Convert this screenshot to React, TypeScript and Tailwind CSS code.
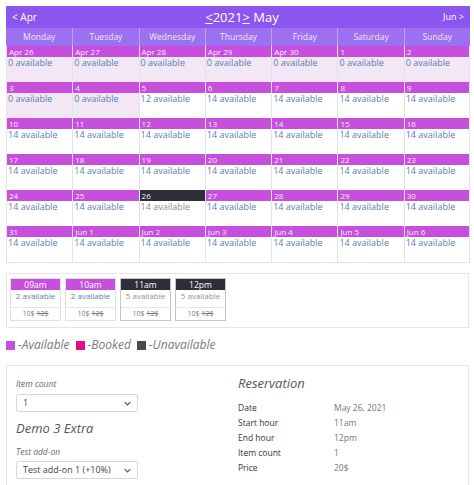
import React from 'react';

type Day = { label: string; count: number; past?: boolean; selected?: boolean };

const weeks: Day[][] = [
  [
    { label: 'Apr 26', count: 0, past: true },
    { label: 'Apr 27', count: 0, past: true },
    { label: 'Apr 28', count: 0, past: true },
    { label: 'Apr 29', count: 0, past: true },
    { label: 'Apr 30', count: 0, past: true },
    { label: '1', count: 0, past: true },
    { label: '2', count: 0, past: true },
  ],
  [
    { label: '3', count: 0, past: true },
    { label: '4', count: 0, past: true },
    { label: '5', count: 12 },
    { label: '6', count: 14 },
    { label: '7', count: 14 },
    { label: '8', count: 14 },
    { label: '9', count: 14 },
  ],
  ['10', '11', '12', '13', '14', '15', '16'].map((l) => ({ label: l, count: 14 })),
  ['17', '18', '19', '20', '21', '22', '23'].map((l) => ({ label: l, count: 14 })),
  [
    { label: '24', count: 14 },
    { label: '25', count: 14 },
    { label: '26', count: 14, selected: true },
    { label: '27', count: 14 },
    { label: '28', count: 14 },
    { label: '29', count: 14 },
    { label: '30', count: 14 },
  ],
  ['31', 'Jun 1', 'Jun 2', 'Jun 3', 'Jun 4', 'Jun 5', 'Jun 6'].map((l) => ({ label: l, count: 14 })),
];

const weekdays = ['Monday', 'Tuesday', 'Wednesday', 'Thursday', 'Friday', 'Saturday', 'Sunday'];

const slots = [
  { time: '09am', count: 2, open: true },
  { time: '10am', count: 2, open: true },
  { time: '11am', count: 5, open: false },
  { time: '12pm', count: 5, open: false },
];

const details = [
  ['Date', 'May 26, 2021'],
  ['Start hour', '11am'],
  ['End hour', '12pm'],
  ['Item count', '1'],
  ['Price', '20$'],
];

function Chevron() {
  return (
    <svg width="7" height="5" viewBox="0 0 10 6" fill="none" stroke="#555" strokeWidth="1.6">
      <path d="M1 1l4 4 4-4" />
    </svg>
  );
}

export default function App() {
  return (
    <div className="w-[474px] h-[485px] overflow-hidden bg-white px-[6px] pt-[6px] font-['Open_Sans',sans-serif]">
      {/* Calendar */}
      <div className="w-[464px] border-b border-[#e2e2e2]">
        <div className="h-[22px] bg-[#8d55ef] text-white flex items-center justify-between px-[6px]">
          <span className="text-[10px]">&lt; Apr</span>
          <span className="text-[13px] leading-none ml-[4px]">
            <span className="underline">&lt;</span>2021<span className="underline">&gt;</span> May
          </span>
          <span className="text-[9px]">Jun &gt;</span>
        </div>
        <div className="grid grid-cols-7 h-[18px] bg-[#9c70f1]">
          {weekdays.map((d, i) => (
            <div
              key={d}
              className={`flex items-center justify-center text-[8.5px] text-[#efe7fd] ${i > 0 ? 'border-l border-[#c0a4f6]' : ''}`}
            >
              {d}
            </div>
          ))}
        </div>
        {weeks.map((w, wi) => (
          <div key={wi} className="grid grid-cols-7">
            {w.map((d, di) => (
              <div
                key={di}
                className={`h-[36px] flex flex-col border-l ${di === 6 ? 'border-r' : ''} border-[#e3e3e3] ${d.past ? 'bg-[#f3e6f5]' : 'bg-white'}`}
              >
                <div
                  className={`h-[11px] leading-[11px] text-[8px] pl-[2px] text-[#fbeefd] ${d.selected ? 'bg-[#2e2d38]' : 'bg-[#c650dd]'}`}
                >
                  {d.label}
                </div>
                <div
                  className={`text-[9px] leading-[11px] pl-[1px] ${d.selected ? 'text-[#8f8f8f]' : 'text-[#5781ab]'}`}
                >
                  {d.count} available
                </div>
              </div>
            ))}
          </div>
        ))}
      </div>

      {/* Time slots */}
      <div className="mt-[10px] w-[463px] h-[55px] border border-[#e6e6e6] px-[3px] pt-[4px] flex gap-[4px]">
        {slots.map((s) => (
          <div
            key={s.time}
            className={`w-[51px] h-[43px] border flex flex-col ${s.open ? 'border-[#e0e0e0]' : 'border-[#c6c6c6]'}`}
          >
            <div
              className={`h-[11px] leading-[11px] text-center text-[8.5px] text-white ${s.open ? 'bg-[#c650dd]' : 'bg-[#2e2d38]'}`}
            >
              {s.time}
            </div>
            <div
              className={`text-center text-[8px] leading-[12px] ${s.open ? 'text-[#5781ab]' : 'text-[#8f8f8f]'}`}
            >
              {s.count} available
            </div>
            <div className="mt-auto border-t border-[#e6e6e6] h-[13px] leading-[12px] text-center text-[7px] text-[#777]">
              10$ <span className="line-through">12$</span>
            </div>
          </div>
        ))}
      </div>

      {/* Legend */}
      <div className="mt-[11px] flex items-center text-[12px] italic text-[#7a7a7a] leading-none">
        <span className="w-[9px] h-[9px] bg-[#c650dd] inline-block mr-[3px]" />
        <span className="mr-[6px]">-Available</span>
        <span className="w-[9px] h-[9px] bg-[#e50f84] inline-block mr-[3px]" />
        <span className="mr-[6px]">-Booked</span>
        <span className="w-[9px] h-[9px] bg-[#4a4a4a] inline-block mr-[3px]" />
        <span>-Unavailable</span>
      </div>

      {/* Form */}
      <div className="mt-[14px] w-[463px] h-[140px] border border-[#e6e6e6] flex pl-[9px] pt-[12px]">
        <div className="w-[222px]">
          <div className="text-[8.5px] italic text-[#666] leading-[12px]">Item count</div>
          <div className="mt-[4px] w-[122px] h-[18px] border border-[#d8d8d8] rounded-[2px] flex items-center justify-between px-[6px] text-[9px] text-[#444]">
            <span>1</span>
            <Chevron />
          </div>
          <div className="mt-[7px] text-[13px] italic text-[#555] leading-[18px]">Demo 3 Extra</div>
          <div className="mt-[9px] text-[8.5px] italic text-[#666] leading-[12px]">Test add-on</div>
          <div className="mt-[3px] w-[122px] h-[18px] border border-[#d8d8d8] rounded-[2px] flex items-center justify-between px-[6px] text-[9px] text-[#444]">
            <span>Test add-on 1 (+10%)</span>
            <Chevron />
          </div>
        </div>
        <div className="flex-1">
          <div className="text-[13px] italic text-[#555] leading-[18px] -mt-[4px]">Reservation</div>
          <div className="mt-[9px]">
            {details.map(([k, v]) => (
              <div key={k} className="flex h-[15px] items-center text-[8.5px]">
                <span className="w-[96px] text-[#333]">{k}</span>
                <span className="text-[#777]">{v}</span>
              </div>
            ))}
          </div>
        </div>
      </div>
    </div>
  );
}
